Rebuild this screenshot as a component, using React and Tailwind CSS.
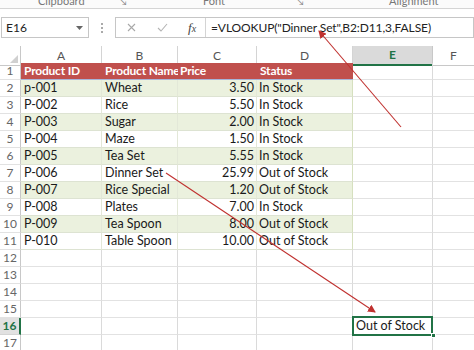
import React from "react";

const rows = [
  ["p-001", "Wheat", "3.50", "In Stock"],
  ["P-002", "Rice", "5.50", "In Stock"],
  ["P-003", "Sugar", "2.00", "In Stock"],
  ["P-004", "Maze", "1.50", "In Stock"],
  ["P-005", "Tea Set", "5.55", "In Stock"],
  ["P-006", "Dinner Set", "25.99", "Out of Stock"],
  ["P-007", "Rice Special", "1.20", "Out of Stock"],
  ["P-008", "Plates", "7.00", "In Stock"],
  ["P-009", "Tea Spoon", "8.00", "Out of Stock"],
  ["P-010", "Table Spoon", "10.00", "Out of Stock"],
];

const cols = "grid grid-cols-[21px_81px_76px_79px_96px_80px_41px]";

function RowHead({ n, active }) {
  return (
    <div
      className={
        active
          ? "h-[17px] flex items-center justify-center bg-[#e1e1e1] border-r-2 border-r-[#217346] border-b border-b-[#d4d4d4] text-[#217346] font-bold text-[12px]"
          : "h-[17px] flex items-center justify-center bg-white border-r border-r-[#c8c8c8] border-b border-b-[#e2e2e2] text-[#666] text-[12px]"
      }
    >
      {n}
    </div>
  );
}

export default function App() {
  return (
    <div className="relative w-[474px] h-[350px] overflow-hidden bg-white font-['Lato',sans-serif] text-[12px] text-[#1a1a1a]">
      {/* ribbon bottom strip */}
      <div className="relative h-[9px] border-b border-b-[#d5d5d5] bg-[#fbfbfb] overflow-hidden">
        <span className="absolute left-[38px] top-[-7px] text-[11px] text-[#777]">Clipboard</span>
        <span className="absolute left-[120px] top-[-5px] text-[9px] text-[#888]">↘</span>
        <span className="absolute left-[203px] top-[-7px] text-[11px] text-[#777]">Font</span>
        <span className="absolute left-[297px] top-[-5px] text-[9px] text-[#888]">↘</span>
        <span className="absolute left-[389px] top-[-7px] text-[11px] text-[#777]">Alignment</span>
      </div>

      {/* formula bar */}
      <div className="flex items-start h-[37px] pt-[8px]">
        <div className="ml-[1px] w-[88px] h-[21px] border border-[#c6c6c6] flex items-center justify-between pl-[4px] pr-[5px]">
          <span className="text-[12px] text-[#222]">E16</span>
          <svg width="7" height="4" viewBox="0 0 7 4"><path d="M0 0h7L3.5 4z" fill="#666" /></svg>
        </div>
        <div className="w-[26px] h-[21px] flex flex-col items-center justify-center gap-[2px]">
          <span className="w-[2px] h-[2px] bg-[#aaa]" />
          <span className="w-[2px] h-[2px] bg-[#aaa]" />
          <span className="w-[2px] h-[2px] bg-[#aaa]" />
        </div>
        <div className="flex-1 h-[21px] border border-[#c6c6c6] flex items-center">
          <div className="w-[90px] h-full flex items-center border-r border-r-[#d4d4d4]">
            <svg className="ml-[11px]" width="9" height="9" viewBox="0 0 9 9"><path d="M1 1l7 7M8 1L1 8" stroke="#a8a8a8" strokeWidth="1.1" /></svg>
            <svg className="ml-[21px]" width="11" height="9" viewBox="0 0 11 9"><path d="M1 5l3 3 6-7" stroke="#b4b4b4" strokeWidth="1.1" fill="none" /></svg>
            <span className="ml-[20px] font-['Liberation_Serif',serif] italic text-[13px] text-[#444] leading-none">f<span className="text-[10px]">x</span></span>
          </div>
          <span className="ml-[5px] text-[12px] tracking-[-0.1px] text-[#222] whitespace-nowrap">=VLOOKUP("Dinner Set",B2:D11,3,FALSE)</span>
        </div>
      </div>

      {/* column headers */}
      <div className={cols + " h-[17px]"}>
        <div className="relative border-r border-r-[#c8c8c8] border-b border-b-[#c8c8c8] bg-white">
          <svg className="absolute right-[2px] bottom-[2px]" width="8" height="8" viewBox="0 0 8 8"><path d="M8 0v8H0z" fill="#d0d0d0" /></svg>
        </div>
        {["A", "B", "C", "D"].map((c) => (
          <div key={c} className="flex items-center justify-center text-[#555] text-[12px] border-r border-r-[#d4d4d4] border-b border-b-[#c8c8c8] bg-white">{c}</div>
        ))}
        <div className="flex items-center justify-center text-[#217346] font-bold text-[12px] bg-[#dadada] border-r border-r-[#c8c8c8] border-b-2 border-b-[#217346]">E</div>
        <div className="flex items-center justify-center text-[#555] text-[12px] border-b border-b-[#c8c8c8] bg-white">F</div>
      </div>

      {/* row 1 header */}
      <div className={cols}>
        <RowHead n={1} />
        <div className="h-[17px] bg-[#c0504d] border-b border-b-[#a7b4d8] flex items-center pl-[3px] text-white font-bold text-[12px] tracking-[-0.2px] whitespace-nowrap">Product ID</div>
        <div className="h-[17px] bg-[#c0504d] border-b border-b-[#a7b4d8] flex items-center pl-[3px] text-white font-bold text-[12px] tracking-[-0.2px] whitespace-nowrap">Product Name</div>
        <div className="h-[17px] bg-[#c0504d] border-b border-b-[#a7b4d8] flex items-center pl-[2px] text-white font-bold text-[12px] tracking-[-0.2px] whitespace-nowrap">Price</div>
        <div className="h-[17px] bg-[#c0504d] border-b border-b-[#a7b4d8] flex items-center pl-[3px] text-white font-bold text-[12px] tracking-[-0.2px] whitespace-nowrap">Status</div>
        <div className="h-[17px] border-r border-r-[#dadada] border-b border-b-[#e2e2e2]" />
        <div className="h-[17px] border-b border-b-[#e2e2e2]" />
      </div>

      {rows.map((r, i) => {
        const band = i % 2 === 0 ? "bg-[#ebf1de]" : "bg-white";
        const cell = "h-[17px] flex items-center whitespace-nowrap text-[12.5px] border-b border-b-[#dde3d2] " + band;
        return (
          <div key={i} className={cols}>
            <RowHead n={i + 2} />
            <div className={cell + " pl-[3px] border-r border-r-[#e3e8d8]"}>{r[0]}</div>
            <div className={cell + " pl-[3px] border-r border-r-[#e3e8d8]"}>{r[1]}</div>
            <div className={cell + " justify-end pr-[2px] border-r border-r-[#e3e8d8]"}>{r[2]}</div>
            <div className={cell + " pl-[2px] border-r border-r-[#d6e0bf]"}>{r[3]}</div>
            <div className="h-[17px] border-r border-r-[#dadada] border-b border-b-[#e2e2e2]" />
            <div className="h-[17px] border-b border-b-[#e2e2e2]" />
          </div>
        );
      })}

      {[12, 13, 14, 15, 16, 17].map((n) => (
        <div key={n} className={cols}>
          <RowHead n={n} active={n === 16} />
          <div className="h-[17px] border-r border-r-[#dadada] border-b border-b-[#e2e2e2]" />
          <div className="h-[17px] border-r border-r-[#dadada] border-b border-b-[#e2e2e2]" />
          <div className="h-[17px] border-r border-r-[#dadada] border-b border-b-[#e2e2e2]" />
          <div className="h-[17px] border-r border-r-[#dadada] border-b border-b-[#e2e2e2]" />
          {n === 16 ? (
            <div className="relative h-[17px] border-r border-r-[#dadada] border-b border-b-[#e2e2e2]">
              <div className="absolute left-[-1px] top-[-2px] w-[81px] h-[20px] border-2 border-[#217346] flex items-center pl-[2px] text-[12.5px] whitespace-nowrap">Out of Stock</div>
              <div className="absolute right-[-4px] bottom-[-4px] w-[5px] h-[5px] bg-[#217346] border border-white" />
            </div>
          ) : (
            <div className="h-[17px] border-r border-r-[#dadada] border-b border-b-[#e2e2e2]" />
          )}
          <div className="h-[17px] border-b border-b-[#e2e2e2]" />
        </div>
      ))}

      {/* annotation arrows */}
      <svg className="absolute left-0 top-0 pointer-events-none" width="474" height="350" viewBox="0 0 474 350">
        <defs>
          <marker id="ah" markerWidth="8" markerHeight="8" refX="7" refY="4" orient="auto" markerUnits="userSpaceOnUse">
            <path d="M0 0L8 4L0 8z" fill="#c0312f" />
          </marker>
        </defs>
        <line x1="401" y1="127" x2="319" y2="31" stroke="#c0312f" strokeWidth="1.1" markerEnd="url(#ah)" />
        <line x1="166" y1="173" x2="375" y2="312" stroke="#c0312f" strokeWidth="1.1" markerEnd="url(#ah)" />
      </svg>
    </div>
  );
}
